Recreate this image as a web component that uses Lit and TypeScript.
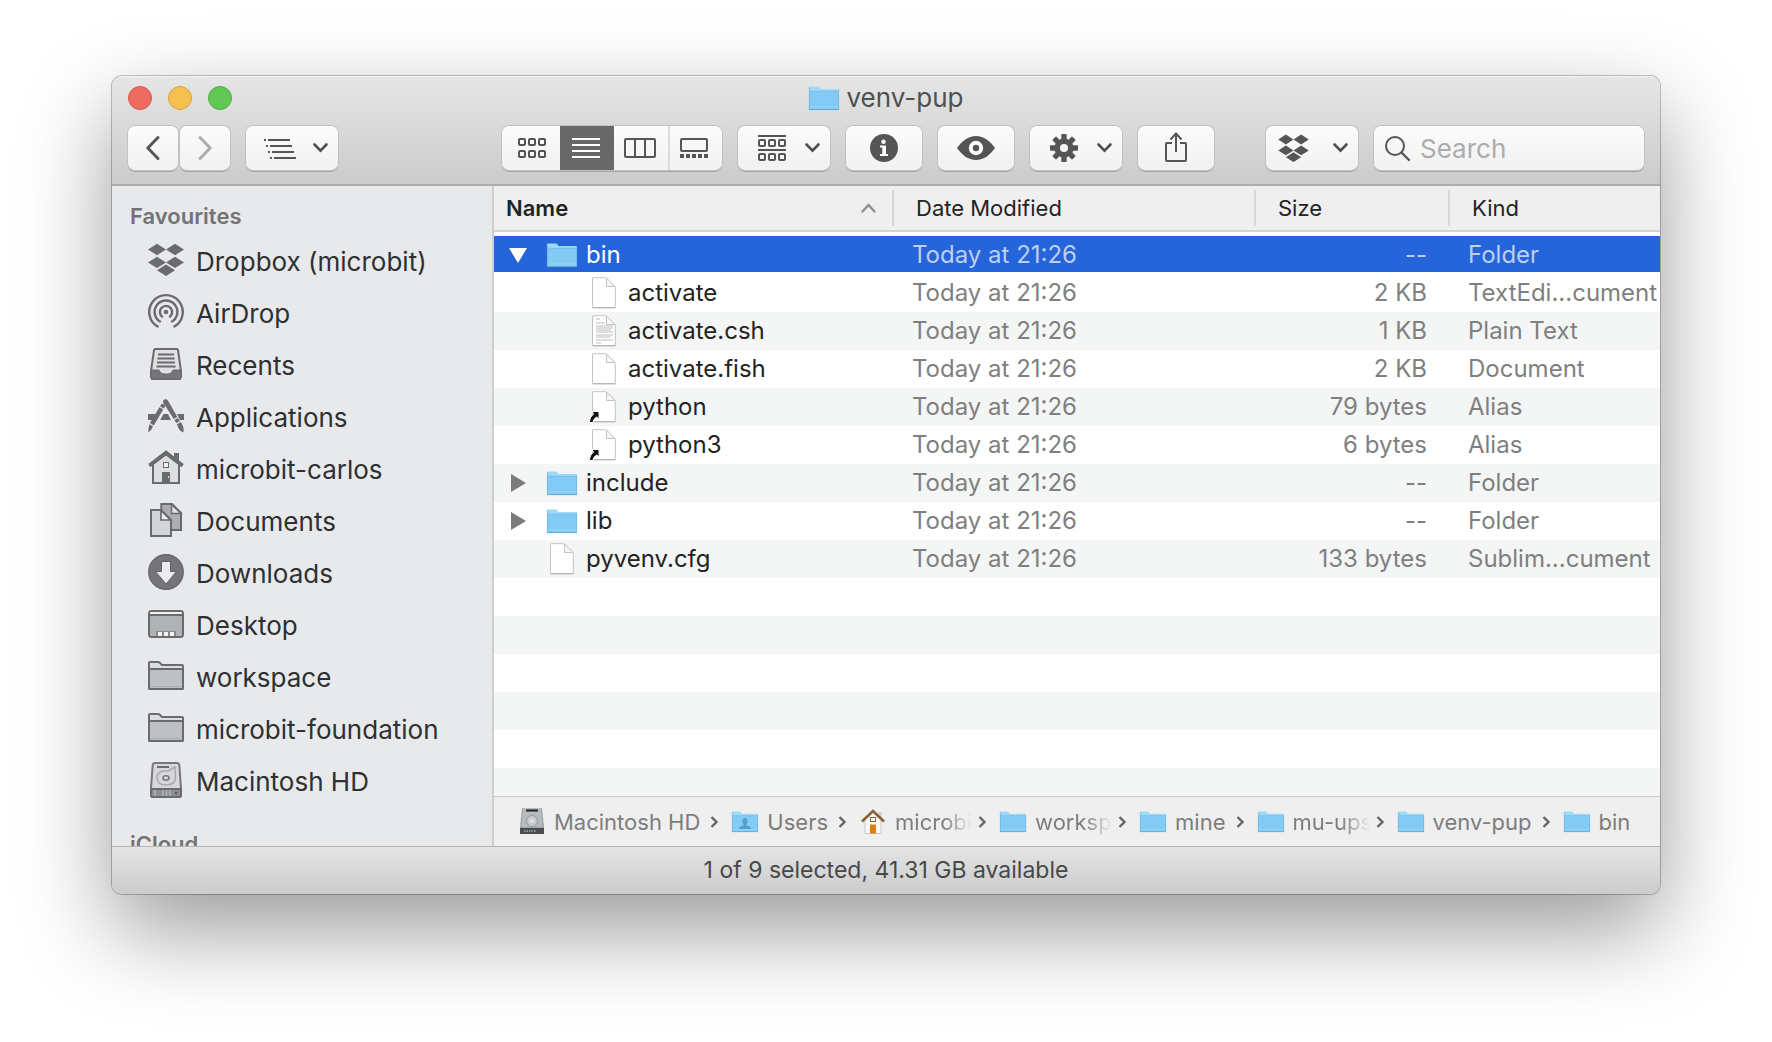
import { LitElement, html, css, svg, nothing, TemplateResult } from "lit";
import { customElement, property, state } from "lit/decorators.js";
import { classMap } from "lit/directives/class-map.js";

/* ---------- shared icon drawings ---------- */

const dropboxShape = svg`
  <path d="M9 .7 18 6.5 9 12.3 0 6.5ZM27 .7 36 6.5 27 12.3 18 6.5ZM9 13.7 18 19.4 9 25.1 0 19.4ZM27 13.7 36 19.4 27 25.1 18 19.4ZM18 21.6 27 27.3 18 33 9 27.3Z"/>`;

const folderOutline = svg`
  <path d="M1 29.5V4Q1 3 2 3H10Q11 3 12 4L14 6H34Q35 6 35 7V29.5Q35 30 34.500 30H1.500Q1 30 1 29.500Z" fill="#dcdddf" stroke="#6a6b6d" stroke-width="2"/>
  <path d="M2 11H34V29H2Z" fill="#bfc0c2"/>
  <path d="M2 27.500H34" stroke="#adaeb0" stroke-width="1"/>
  <path d="M1 11.500Q1 10 3 10H33Q35 10 35 11.500" fill="none" stroke="#6a6b6d" stroke-width="2"/>`;

const sideIcons: Record<string, TemplateResult> = {
  dropbox: svg`<g fill="#6a6b6d">${dropboxShape}</g>`,
  airdrop: svg`
    <g fill="none" stroke="#6a6b6d" stroke-width="2.400">
      <path d="M10.500 32A16.800 16.800 0 1 1 25.500 32"/>
      <path d="M12.800 27A11.400 11.400 0 1 1 23.200 27"/>
      <path d="M14.800 22.200A6.100 6.100 0 1 1 21.200 22.200"/>
    </g>
    <circle cx="18" cy="17" r="2.300" fill="#6a6b6d"/>`,
  recents: svg`
    <path d="M7 2H29L30 3 33 24V30L32 32H4L3 30V24L6 3Z" fill="#e0e0e2" stroke="#6a6b6d" stroke-width="2"/>
    <path d="M10 7.500H26M9.500 11.500H26.500M9 15.500H27M8.500 19.500H27.500" stroke="#6a6b6d" stroke-width="2"/>
    <path d="M3 23H11Q12 27 16 27H20Q24 27 25 23H33V31L32 32H4L3 31Z" fill="#747577" stroke="#6a6b6d" stroke-width="1"/>`,
  applications: svg`
    <g fill="#6a6b6d">
      <path d="M0 15H7.500L4.500 21H0ZM15.500 15H20L23 21H12.200ZM29 15H36V21H32Z"/>
      <path d="M13.200 5.400Q14.600 4 16.200 5.200 17.800 6.400 16.800 8L15.800 9.400 12 7.200ZM11.400 8.200 15.200 10.600 5.800 26.400 2 24.100ZM1.600 25.300 5 27.300Q3.500 31.500.3 33.500 0 29 1.600 25.300Z"/>
      <path d="M15.200 1.500Q16.500-.3 18.400.3 19.600.9 20.200 2L29.400 17.900 25.700 20 15.500 4Q14.700 2.700 15.200 1.500ZM26.300 21 30 18.900 31.800 22 28.300 24.200ZM29 25.200 32.600 23Q36.600 27.500 35.300 33.600 30.500 31.500 29 25.200Z"/>
    </g>`,
  home: svg`
    <path d="M5 13 18 3 31 13V32H5Z" fill="#dedfe1" stroke="#6a6b6d" stroke-width="2"/>
    <path d="M26 2H31V9.500L26 6Z" fill="#6a6b6d"/>
    <path d="M.300 13 18-.700 35.700 13 33.800 16.200 18 4.600 2.200 16.200Z" fill="#6a6b6d"/>
    <rect x="15.500" y="11.500" width="5" height="5" fill="#f2f2f3" stroke="#6a6b6d"/>
    <path d="M14 21H22V33H14Z" fill="#6a6b6d"/><path d="M20.500 25V27" stroke="#e5e5e7"/>`,
  documents: svg`
    <path d="M13.300 1H24L33 10V27H13.300Z" fill="#adaeb0" stroke="#6a6b6d" stroke-width="2"/>
    <path d="M23.500 1.500V10.500H33Z" fill="#e4e4e6" stroke="#6a6b6d" stroke-width="1.500"/>
    <path d="M3 7H13L23 17V33H3Z" fill="#d3d4d6" stroke="#6a6b6d" stroke-width="2"/>
    <path d="M13 7.500V17H22.500Z" fill="#f0f0f2" stroke="#6a6b6d" stroke-width="1.700"/>`,
  downloads: svg`
    <circle cx="18" cy="17" r="17.200" fill="#747577" stroke="#67686a" stroke-width="1.500"/>
    <path d="M13.500 6.500H22.500V16.500H28.500L18 29 7.500 16.500H13.500Z" fill="#ebebed" stroke="#606163"/>`,
  desktop: svg`
    <rect x="1" y="4" width="34" height="26" rx="2.500" fill="#b1b2b4" stroke="#6a6b6d" stroke-width="2"/>
    <path d="M2 7V6Q2 5 3 5H33Q34 5 34 6V7Z" fill="#f2f2f3"/>
    <path d="M1 8H35" stroke="#6a6b6d" stroke-width="2"/>
    <path d="M8 24H28V29H8Z" fill="#87888a"/>
    <path d="M10 25H14V29H10ZM16 25H20V29H16ZM22 25H26V29H22Z" fill="#f2f2f3"/>`,
  folder: folderOutline,
  disk: svg`
    <path d="M7 0H29Q31 0 31.300 2L33 25V32Q33 34 31 34H5Q3 34 3 32V25L4.700 2Q5 0 7 0Z" fill="#d6d7d9" stroke="#77787a" stroke-width="2"/>
    <path d="M9 4H21" stroke="#6a6b6d" stroke-width="2"/>
    <path d="M27 4 20 8Q9 7 9 15 9.500 22 18 22 27.500 22 27.500 14Z" fill="none" stroke="#a9aaac" stroke-width="1.500"/>
    <ellipse cx="18" cy="15" rx="3" ry="2.200" fill="none" stroke="#77787a" stroke-width="1.600"/>
    <path d="M3 26H33V32Q33 34 31 34H5Q3 34 3 32Z" fill="#8d8e90" stroke="#6a6b6d" stroke-width="2"/>
    <path d="M7 27V33M15 27V33M18.500 27V33M22 27V33" stroke="#b4b5b7" stroke-width="1.500"/>
    <circle cx="28" cy="30" r="1.200" fill="#4f5052"/>`,
};

const chevronDown = html`<svg class="caret" width="15" height="10" viewBox="0 0 15 10" aria-hidden="true">
  <path d="M1.500 1.500 7.500 7.700 13.500 1.500" fill="none" stroke="#4f4f4f" stroke-width="2.600" stroke-linecap="round"/></svg>`;

const square = (x: number, y: number) =>
  svg`<rect x=${x + 1} y=${y + 1} width="6" height="6" rx="1" fill="none" stroke="#555" stroke-width="2"/>`;

const toolIcons = {
  arrange: html`<svg width="32" height="22" viewBox="0 0 32 22"><path fill="#555" d="M0 2h2v2H0zM4 2h22v2H4zM2 8h2v2H2zM6 8h22v2H6zM4 14h2v2H4zM8 14h22v2H8zM6 20h2v2H6zM10 20h22v2H10z"/></svg>`,
  grid: html`<svg width="28" height="20" viewBox="0 0 28 20">${[0, 10, 20].map((x) => [square(x, 0), square(x, 12)])}</svg>`,
  list: html`<svg width="28" height="20" viewBox="0 0 28 20"><path fill="#fff" d="M0 0h28v2H0zM0 6h28v2H0zM0 12h28v2H0zM0 18h28v2H0z"/></svg>`,
  columns: html`<svg width="32" height="20" viewBox="0 0 32 20"><rect x="1" y="1" width="30" height="18" rx="1" fill="none" stroke="#555" stroke-width="2"/><path d="M11 1V19M21 1V19" stroke="#555" stroke-width="2"/></svg>`,
  gallery: html`<svg width="28" height="20" viewBox="0 0 28 20"><rect x="1" y="1" width="26" height="12" rx="1" fill="none" stroke="#555" stroke-width="2"/><path fill="#555" d="M0 16h4v4H0zM6 16h4v4H6zM12 16h4v4h-4zM18 16h4v4h-4zM24 16h4v4h-4z"/></svg>`,
  group: html`<svg width="28" height="26" viewBox="0 0 28 26">${[0, 10, 20].map((x) => [square(x, 4), square(x, 18)])}<path fill="#555" d="M0 0h28v2H0zM0 14h28v2H0z"/></svg>`,
  info: html`<svg width="28" height="28" viewBox="0 0 28 28"><circle cx="14" cy="14" r="14" fill="#555"/><circle cx="13.500" cy="7.700" r="2.200" fill="#fff"/><path fill="#fff" d="M10 11.500h6v8.500h2v2h-8v-2h2.300v-6.500H10z"/></svg>`,
  eye: html`<svg width="38" height="24" viewBox="0 0 38 24"><path fill="#555" d="M0 12C5 5 11 0 19 0s14 5 19 12c-5 7-11 12-19 12S5 19 0 12Z"/><circle cx="19" cy="12" r="5.200" fill="#555" stroke="#fff" stroke-width="4"/></svg>`,
  gear: html`<svg width="28" height="28" viewBox="0 0 28 28"><g fill="#555">${[0, 45, 90, 135].map(
    (a) => svg`<rect x="11.300" y="0" width="5.400" height="28" rx="1" transform="rotate(${a} 14 14)"/>`
  )}<circle cx="14" cy="14" r="9.600"/></g><circle cx="14" cy="14" r="4" fill="#f6f6f6"/></svg>`,
  share: html`<svg class="raised" width="22" height="30" viewBox="0 0 22 30"><g fill="none" stroke="#555" stroke-width="2"><path d="M7 11H2Q1 11 1 12V28Q1 29 2 29H20Q21 29 21 28V12Q21 11 20 11H15"/><path d="M11 20V1.500M5.500 7.500 11 1.500 16.500 7.500"/></g></svg>`,
  dropbox: html`<svg width="31" height="28" viewBox="0 0 36 33" fill="#555">${dropboxShape}</svg>`,
  back: html`<svg width="14" height="24" viewBox="0 0 14 24"><path d="M12 1.500 1.800 12 12 22.500" fill="none" stroke="#555" stroke-width="3" stroke-linecap="round" stroke-linejoin="round"/></svg>`,
  forward: html`<svg width="14" height="24" viewBox="0 0 14 24"><path d="M2 1.500 12.200 12 2 22.500" fill="none" stroke="#acacac" stroke-width="3" stroke-linecap="round" stroke-linejoin="round"/></svg>`,
};

const folderIcon = (w = 30, person = false) => html`<svg width=${w} height=${Math.round(w * 0.84)} viewBox="0 0 30 25" aria-hidden="true">
  <path d="M0 1.500Q0 .500 1 .500H9Q10 .500 10.500 1.500L11.500 3H29Q30 3 30 4V23.500H0Z" fill="#a0d9f8"/>
  <path d="M0 5.500H30V23Q30 24 29 24H1Q0 24 0 23Z" fill="#83cbf5"/>
  <path d="M.500 5.300H29.500" stroke="#72bfee" stroke-width="1"/>
  <path d="M1 21H29" stroke="#9ad8fa" stroke-width="1"/>
  <path d="M0 23.600H30" stroke="#64a9d3" stroke-width="1"/>
  <path d="M.400 1.500V23.500M29.600 4V23.500" stroke="#6db7e4" stroke-width=".800"/>
  ${person ? svg`<path fill="#4f9fd0" d="M15 8q3 0 3 3.500 0 2-1.300 3.500v1.500q5 1 5.300 4H8q.300-3 5.300-4V15Q12 13.500 12 11.500 12 8 15 8Z"/>` : nothing}
</svg>`;

const fileIcon = (kind: "file" | "text" | "alias") => html`<svg width="30" height="32" viewBox="0 0 30 32" aria-hidden="true">
  <path d="M4 .700H17L26.300 10V30.500H4Q3.500 30.500 3.500 30V1.200Q3.500.700 4 .700Z" fill="#fff" stroke="#c4c4c4"/>
  <path d="M3.500 30.900H26.500" stroke="#b2b2b2"/>
  ${kind === "text"
    ? svg`<path d="M7 4h4M7 8h9M7 11h17M7 13h17M7 15h15M7 17h17M7 20h17M7 22h15M7 25h17M7 28h5" stroke="#bdbdbd" stroke-width="1"/>`
    : nothing}
  <path d="M17.500 1V9.500H26Z" fill="#f7f7f7" stroke="#c4c4c4"/>
  ${kind === "alias"
    ? svg`<path d="M2.500 20.500H10V28L7.800 26Q4.500 27.500 3.800 31.500H.500Q.500 26 4.700 23Z" fill="#111" stroke="#fff" stroke-width="1"/>`
    : nothing}
</svg>`;

const pathIcons: Record<string, TemplateResult> = {
  disk: html`<svg width="26" height="28" viewBox="0 0 26 28" aria-hidden="true">
    <path d="M3 0H23L25 20V25Q25 26 24 26H2Q1 26 1 25V20Z" fill="#9aa2a6"/>
    <path d="M4 0H22L23.500 19H2.500Z" fill="#b4bcc0"/>
    <path d="M7 2.500H19" stroke="#222" stroke-width="2"/>
    <circle cx="13" cy="13" r="5.500" fill="#c5cbce" stroke="#8f989d"/><circle cx="13" cy="13" r="2" fill="#dfe3e5"/>
    <path d="M1 20H25V26H1Z" fill="#4a4d4f"/><path d="M5 23H17" stroke="#8c9092" stroke-width="2" stroke-dasharray="1.500 1"/></svg>`,
  users: folderIcon(26, true),
  home: html`<svg width="26" height="26" viewBox="0 0 26 26" aria-hidden="true">
    <path d="M18 3H22V9L18 6Z" fill="#d8d4cf"/>
    <path d="M5 11 13 3.500 21 11V24.500H5Z" fill="#f8f8f6" stroke="#c9c9c6"/>
    <path d="M2 12.500 13 2 24 12.500" fill="none" stroke="#8b6236" stroke-width="2.600"/>
    <rect x="10.500" y="8.500" width="5" height="4" fill="#fff" stroke="#8b6236"/>
    <path d="M10 15.500H16V24.500H10Z" fill="#dd7d1e"/></svg>`,
  folder: folderIcon(26),
};

/* ---------- data ---------- */

interface Entry {
  name: string;
  size: string;
  kind: string;
  icon: "folder" | "file" | "text" | "alias";
  nested?: boolean;
}

const entries: Entry[] = [
  { name: "bin", size: "--", kind: "Folder", icon: "folder" },
  { name: "activate", size: "2 KB", kind: "TextEdi...cument", icon: "file", nested: true },
  { name: "activate.csh", size: "1 KB", kind: "Plain Text", icon: "text", nested: true },
  { name: "activate.fish", size: "2 KB", kind: "Document", icon: "file", nested: true },
  { name: "python", size: "79 bytes", kind: "Alias", icon: "alias", nested: true },
  { name: "python3", size: "6 bytes", kind: "Alias", icon: "alias", nested: true },
  { name: "include", size: "--", kind: "Folder", icon: "folder" },
  { name: "lib", size: "--", kind: "Folder", icon: "folder" },
  { name: "pyvenv.cfg", size: "133 bytes", kind: "Sublim...cument", icon: "file" },
];

const favourites: [string, string][] = [
  ["dropbox", "Dropbox (microbit)"],
  ["airdrop", "AirDrop"],
  ["recents", "Recents"],
  ["applications", "Applications"],
  ["home", "microbit-carlos"],
  ["documents", "Documents"],
  ["downloads", "Downloads"],
  ["desktop", "Desktop"],
  ["folder", "workspace"],
  ["folder", "microbit-foundation"],
  ["disk", "Macintosh HD"],
];

const crumbs: { icon: string; label: string; clipped?: boolean }[] = [
  { icon: "disk", label: "Macintosh HD" },
  { icon: "users", label: "Users" },
  { icon: "home", label: "microbi", clipped: true },
  { icon: "folder", label: "worksp", clipped: true },
  { icon: "folder", label: "mine" },
  { icon: "folder", label: "mu-ups", clipped: true },
  { icon: "folder", label: "venv-pup" },
  { icon: "folder", label: "bin" },
];

const reset = css`
  :host, * { box-sizing: border-box; }
  button, input { font: inherit; color: inherit; margin: 0; padding: 0; border: 0; background: none; }
  a { color: inherit; text-decoration: none; }
  svg { display: block; flex: none; overflow: visible; }
`;

/* ---------- toolbar ---------- */

@customElement("finder-toolbar")
export class FinderToolbar extends LitElement {
  @property() heading = "";
  @state() private view = "list";

  static styles = [reset, css`
    :host {
      display: block;
      height: 110px;
      background: linear-gradient(#e6e6e6, #cbcbcb);
      border-bottom: 2px solid #adadad;
      box-shadow: inset 0 1px #f5f5f5;
    }
    .title-row { display: grid; grid-template-columns: 1fr auto 1fr; align-items: center; height: 50px; padding: 0 16px 6px; }
    .lights { display: flex; gap: 16px; }
    .light { width: 24px; height: 24px; border-radius: 50%; border: 1px solid; }
    .close { background: #ed6b60; border-color: #d6574c; }
    .minimise { background: #f5c04f; border-color: #d9a23d; }
    .zoom { background: #62c755; border-color: #4eae42; }
    .title { display: flex; align-items: center; gap: 8px; margin: 0; font-size: 26px; font-weight: 400; line-height: 32px; color: #505050; }
    .tools { display: flex; align-items: center; gap: 16px; padding: 0 16px; }
    .pair { display: flex; gap: 2px; }
    .grow-wide { flex: 132 1 0; }
    .grow { flex: 20 1 0; }
    .button, .segments, .search {
      height: 44px;
      border-radius: 7px;
      background: linear-gradient(#fcfcfc, #f1f1f1);
      box-shadow: 0 0 0 1px #c2c2c2, 0 2px 0 #a5a5a5;
      flex: none;
    }
    .button { display: flex; align-items: center; justify-content: center; width: 76px; }
    .nav { width: 50px; }
    .menu { width: 92px; padding: 0 10px; gap: 9px; }
    .glyph { display: flex; width: 48px; justify-content: center; }
    .near { justify-content: flex-start; padding-left: 2px; }
    .raised { margin-bottom: 2px; }
    .segments { display: flex; width: 220px; overflow: hidden; }
    .segment { display: flex; flex: 1; align-items: center; justify-content: center; padding-right: 4px; }
    .segment:first-child { flex: none; width: 58px; padding: 0 0 0 2px; }
    .segment + .segment { border-left: 2px solid #dcdcdc; }
    .segment.on + .segment { border-left-color: transparent; }
    .segment + .segment.on { background: #686868; border-left-color: #686868; }
    .search { display: flex; align-items: center; gap: 10px; width: 270px; padding: 0 11px; }
    .search input { flex: 1; min-width: 0; height: 44px; font-size: 26px; color: #333; outline: none; }
    .search input::placeholder { color: #acacac; opacity: 1; }
  `];

  private segment(id: "grid" | "list" | "columns" | "gallery", label: string) {
    return html`<button class=${classMap({ segment: true, on: this.view === id })} aria-label=${label}
      aria-pressed=${this.view === id} @click=${() => (this.view = id)}>${toolIcons[id]}</button>`;
  }

  private menu(icon: TemplateResult, label: string, near = false) {
    return html`<button class="button menu" aria-label=${label} aria-haspopup="menu">
      <span class=${classMap({ glyph: true, near })}>${icon}</span>${chevronDown}</button>`;
  }

  render() {
    return html`
      <div class="title-row">
        <div class="lights">
          <button class="light close" aria-label="Close"></button>
          <button class="light minimise" aria-label="Minimise"></button>
          <button class="light zoom" aria-label="Zoom"></button>
        </div>
        <h1 class="title">${folderIcon()}${this.heading}</h1>
      </div>
      <div class="tools">
        <div class="pair">
          <button class="button nav" aria-label="Back">${toolIcons.back}</button>
          <button class="button nav" aria-label="Forward" disabled>${toolIcons.forward}</button>
        </div>
        ${this.menu(toolIcons.arrange, "Path")}
        <span class="grow-wide"></span>
        <div class="segments" role="group" aria-label="View">
          ${this.segment("grid", "Icons")}${this.segment("list", "List")}
          ${this.segment("columns", "Columns")}${this.segment("gallery", "Gallery")}
        </div>
        ${this.menu(toolIcons.group, "Group")}
        <button class="button" aria-label="Get info">${toolIcons.info}</button>
        <button class="button" aria-label="Quick look">${toolIcons.eye}</button>
        ${this.menu(toolIcons.gear, "Actions")}
        <button class="button" aria-label="Share">${toolIcons.share}</button>
        <span class="grow"></span>
        ${this.menu(toolIcons.dropbox, "Dropbox", true)}
        <label class="search">
          <svg width="25" height="25" viewBox="0 0 25 25" aria-hidden="true">
            <circle cx="10" cy="10" r="9" fill="none" stroke="#555" stroke-width="2"/>
            <path d="M16.500 16.500 24 24" stroke="#555" stroke-width="2.400" stroke-linecap="round"/>
          </svg>
          <input type="search" placeholder="Search" aria-label="Search" />
        </label>
      </div>`;
  }
}

/* ---------- sidebar ---------- */

@customElement("finder-sidebar")
export class FinderSidebar extends LitElement {
  static styles = [reset, css`
    :host { display: block; overflow: hidden; background: #e8e9eb; border-right: 2px solid #cdced0; padding-top: 16px; }
    .heading { margin: 0 0 5px; padding-left: 18px; font-size: 22px; font-weight: 600; line-height: 28px; color: #727375; }
    .list { list-style: none; margin: 0 0 23px; padding: 0; }
    .item { display: flex; align-items: center; gap: 12px; height: 52px; padding-left: 36px; font-size: 26px; color: #2f3032; white-space: nowrap; }
  `];

  render() {
    return html`
      <h2 class="heading">Favourites</h2>
      <ul class="list">
        ${favourites.map(([icon, label]) => html`<li><a class="item" href="#">
          <svg width="36" height="36" viewBox="0 0 36 36" aria-hidden="true">${sideIcons[icon]}</svg>${label}</a></li>`)}
      </ul>
      <h2 class="heading">iCloud</h2>`;
  }
}

/* ---------- file list ---------- */

@customElement("finder-list")
export class FinderList extends LitElement {
  @state() private selected = "bin";
  @state() private open = new Set(["bin"]);

  static styles = [reset, css`
    :host { display: flex; flex-direction: column; overflow: hidden; background: #fff; }
    .table { width: 100%; table-layout: fixed; border-spacing: 0; font-size: 24px; line-height: 38px; color: #7f7f7f; flex: none; }
    .date { width: 362px; }
    .size { width: 194px; }
    .kind { width: 210px; }
    .head { padding: 4px 0; background: #efefef; border-bottom: 2px solid #d3d3d3; font-size: 22px; font-weight: 400; text-align: left; color: #232323; }
    .sort { display: flex; align-items: center; justify-content: space-between; width: 100%; height: 36px; padding: 0 16px 0 22px; border-right: 2px solid #d6d6d6; }
    .name .sort { padding-left: 12px; font-weight: 600; }
    .kind .sort { border-right: 0; }
    tbody::before { content: ""; display: block; height: 4px; }
    .row:nth-child(odd) { background: #f4f5f5; }
    .cell { height: 38px; padding: 0 0 0 18px; overflow: hidden; white-space: nowrap; }
    .cell.number { padding: 0 23px 0 0; text-align: right; }
    .cell.label { padding-left: 15px; color: #232323; }
    .entry { display: flex; align-items: center; }
    .nested { padding-left: 42px; }
    .toggle { display: flex; align-items: center; justify-content: center; width: 18px; height: 20px; margin-right: 20px; fill: #7b7b7b; }
    .icon { display: flex; justify-content: center; width: 30px; margin-right: 9px; }
    .selected .cell { background: linear-gradient(#2664da 36px, #fff 36px); color: #bdcff5; }
    .selected .cell.label { color: #fff; }
    .selected .toggle { fill: #fff; }
    .filler { flex: 1; background: repeating-linear-gradient(#fff 0 38px, #f4f5f5 38px 76px); }
  `];

  private toggle(name: string) {
    const next = new Set(this.open);
    if (!next.delete(name)) next.add(name);
    this.open = next;
  }

  private row(e: Entry) {
    const isOpen = this.open.has(e.name);
    return html`<tr class=${classMap({ row: true, selected: this.selected === e.name })} @click=${() => (this.selected = e.name)}>
      <td class="cell label">
        <div class=${classMap({ entry: true, nested: !!e.nested })}>
          ${e.icon === "folder"
            ? html`<button class="toggle" aria-label="Show contents" aria-expanded=${isOpen} @click=${() => this.toggle(e.name)}>
                <svg width="18" height="18" viewBox="0 0 18 18"><path d=${isOpen ? "M0 2H18L9 17Z" : "M2 0 17 9 2 18Z"}/></svg></button>`
            : html`<span class="toggle"></span>`}
          <span class="icon">${e.icon === "folder" ? folderIcon() : fileIcon(e.icon)}</span>${e.name}
        </div>
      </td>
      <td class="cell">Today at 21:26</td>
      <td class="cell number">${e.size}</td>
      <td class="cell">${e.kind}</td>
    </tr>`;
  }

  render() {
    return html`
      <table class="table">
        <thead>
          <tr>
            <th class="head name" aria-sort="ascending"><button class="sort">Name
              <svg width="15" height="10" viewBox="0 0 15 10" aria-hidden="true"><path d="M1.500 8.500 7.500 2 13.500 8.500" fill="none" stroke="#8f8f8f" stroke-width="2.400" stroke-linecap="round"/></svg>
            </button></th>
            <th class="head date"><button class="sort">Date Modified</button></th>
            <th class="head size"><button class="sort">Size</button></th>
            <th class="head kind"><button class="sort">Kind</button></th>
          </tr>
        </thead>
        <tbody>${entries.filter((e) => !e.nested || this.open.has("bin")).map((e) => this.row(e))}</tbody>
      </table>
      <div class="filler"></div>`;
  }
}

/* ---------- path bar ---------- */

@customElement("finder-path")
export class FinderPath extends LitElement {
  static styles = [reset, css`
    :host { display: block; background: #efefef; border-top: 1px solid #c8c8c8; }
    .trail { display: flex; align-items: center; height: 49px; margin: 0; padding: 0 24px 0 25px; list-style: none; font-size: 22px; line-height: 30px; color: #7d7d7d; }
    .crumb, .link { display: flex; align-items: center; white-space: nowrap; }
    .link { gap: 9px; }
    .clipped { width: 77px; overflow: hidden; -webkit-mask-image: linear-gradient(90deg, #000 48px, transparent); mask-image: linear-gradient(90deg, #000 48px, transparent); }
    .arrow { margin: 0 14px 0 10px; }
    .tight { margin-left: 6px; }
  `];

  render() {
    return html`<nav aria-label="Path"><ol class="trail">
      ${crumbs.map((c, i) => html`<li class="crumb">
        <a class="link" href="#">${pathIcons[c.icon]}<span class=${classMap({ clipped: !!c.clipped })}>${c.label}</span></a>
        ${i < crumbs.length - 1
          ? html`<svg class=${classMap({ arrow: true, tight: !!c.clipped })} width="8" height="12" viewBox="0 0 8 12" aria-hidden="true">
              <path d="M1.500 1 6.500 6 1.500 11" fill="none" stroke="#666" stroke-width="2.400"/></svg>`
          : nothing}
      </li>`)}
    </ol></nav>`;
  }
}

/* ---------- window ---------- */

@customElement("app-root")
export class AppRoot extends LitElement {
  static styles = css`
    :host {
      display: flex;
      box-sizing: border-box;
      min-height: 100vh;
      padding: 76px 112px 148px;
      overflow: hidden;
      background: #fff;
      font-family: Inter, "Liberation Sans", sans-serif;
    }
    .window {
      display: flex;
      flex: 1;
      flex-direction: column;
      min-width: 0;
      overflow: hidden;
      border-radius: 10px;
      box-shadow: 0 0 0 1px rgba(0, 0, 0, 0.24), 0 36px 90px rgba(0, 0, 0, 0.4);
    }
    .body { display: grid; flex: 1 1 0; grid-template-columns: 382px minmax(0, 1fr); min-height: 0; }
    .sidebar { min-height: 0; }
    .main { display: flex; flex-direction: column; min-width: 0; min-height: 0; }
    .files { flex: 1; min-height: 0; }
    .status {
      box-sizing: border-box;
      height: 48px;
      border-top: 1px solid #b5b5b5;
      background: linear-gradient(#e4e4e4, #cccccc);
      font-size: 23px;
      line-height: 46px;
      text-align: center;
      color: #484848;
    }
  `;

  render() {
    return html`<main class="window">
      <finder-toolbar heading="venv-pup"></finder-toolbar>
      <div class="body">
        <finder-sidebar class="sidebar"></finder-sidebar>
        <div class="main">
          <finder-list class="files"></finder-list>
          <finder-path></finder-path>
        </div>
      </div>
      <footer class="status">1 of 9 selected, 41.31 GB available</footer>
    </main>`;
  }
}
